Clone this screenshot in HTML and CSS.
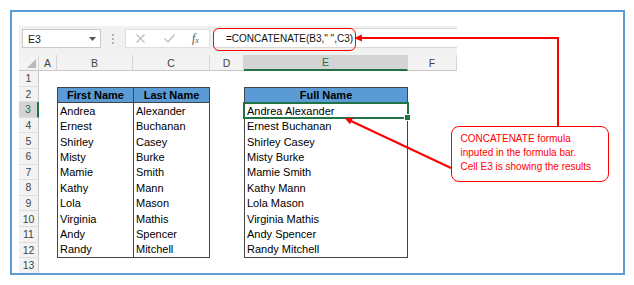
FILE: index.html
```html
<!DOCTYPE html>
<html>
<head>
<meta charset="utf-8">
<link rel="stylesheet" href="styles.css">
</head>
<body>
<div class="frame">
  <div class="excel">
    <div class="fbar">
      <div class="namebox"><span>E3</span><svg width="7" height="4" viewBox="0 0 7 4"><polygon points="0,0 7,0 3.5,4" fill="#555"/></svg></div>
      <div class="dots"><svg width="2" height="10" viewBox="0 0 2 10"><rect x="0" y="0" width="2" height="2" fill="#b5b5b5"/><rect x="0" y="4" width="2" height="2" fill="#b5b5b5"/><rect x="0" y="8" width="2" height="2" fill="#b5b5b5"/></svg></div>
      <div class="btns">
        <svg class="ic ic-x" width="9" height="9" viewBox="0 0 9 9"><path d="M0.5 0.5 L8.5 8.5 M8.5 0.5 L0.5 8.5" stroke="#bdbdbd" stroke-width="1.2" fill="none"/></svg>
        <svg class="ic ic-ok" width="11" height="9" viewBox="0 0 11 9"><path d="M0.5 4.5 L4 8 L10.5 0.5" stroke="#bdbdbd" stroke-width="1.2" fill="none"/></svg>
        <span class="fx">f<span class="fxx">x</span></span>
      </div>
      <div class="formula"><span>=CONCATENATE(B3," ",C3)</span><div class="ring"></div></div>
    </div>
    <div class="sheet">
      <div class="ch corner"><svg width="9" height="9" viewBox="0 0 9 9"><polygon points="9,0 9,9 0,9" fill="#b9b9b9"/></svg></div>
      <div class="ch">A</div>
      <div class="ch">B</div>
      <div class="ch">C</div>
      <div class="ch">D</div>
      <div class="ch sel">E</div>
      <div class="ch">F</div>

      <div class="rh">1</div>
      <div class="rh">2</div>
      <div class="rh sel">3</div>
      <div class="rh">4</div>
      <div class="rh">5</div>
      <div class="rh">6</div>
      <div class="rh">7</div>
      <div class="rh">8</div>
      <div class="rh">9</div>
      <div class="rh">10</div>
      <div class="rh">11</div>
      <div class="rh">12</div>
      <div class="rh">13</div>

      <div class="tbl names">
        <div class="th">First Name</div><div class="th">Last Name</div>
        <div class="td first">Andrea</div><div class="td">Alexander</div>
        <div class="td first">Ernest</div><div class="td">Buchanan</div>
        <div class="td first">Shirley</div><div class="td">Casey</div>
        <div class="td first">Misty</div><div class="td">Burke</div>
        <div class="td first">Mamie</div><div class="td">Smith</div>
        <div class="td first">Kathy</div><div class="td">Mann</div>
        <div class="td first">Lola</div><div class="td">Mason</div>
        <div class="td first">Virginia</div><div class="td">Mathis</div>
        <div class="td first">Andy</div><div class="td">Spencer</div>
        <div class="td first">Randy</div><div class="td">Mitchell</div>
      </div>

      <div class="tbl full">
        <div class="th">Full Name</div>
        <div class="td active">Andrea Alexander</div>
        <div class="td">Ernest Buchanan</div>
        <div class="td">Shirley Casey</div>
        <div class="td">Misty Burke</div>
        <div class="td">Mamie Smith</div>
        <div class="td">Kathy Mann</div>
        <div class="td">Lola Mason</div>
        <div class="td">Virginia Mathis</div>
        <div class="td">Andy Spencer</div>
        <div class="td">Randy Mitchell</div>
      </div>
    </div>
  </div>
</div>

<svg class="annot" width="634" height="285" viewBox="0 0 634 285">
  <polyline points="558,126 558,38 361,38" fill="none" stroke="#ff0000" stroke-width="2"/>
  <polygon points="354,38 362,34.5 362,41.5" fill="#ff0000"/>
  <line x1="451" y1="168" x2="351" y2="121" stroke="#ff0000" stroke-width="2"/>
  <polygon points="344.5,118 353,117.8 350,124.2" fill="#ff0000"/>
</svg>

<div class="callout">CONCATENATE formula<br>inputed in the formula bar.<br>Cell E3 is showing the results</div>
</body>
</html>
```

FILE: styles.css
```css
* { box-sizing: border-box; }

html, body {
  margin: 0;
  background: #ffffff;
}

body {
  padding: 10px 0 0 10px;
  width: 634px;
  height: 285px;
  overflow: hidden;
  font-family: "Liberation Sans", Arial, sans-serif;
  color: #000;
}

.frame {
  width: 615px;
  height: 265px;
  border: 2px solid #5b9bd5;
  padding: 14px 0 0 7px;
  overflow: hidden;
}

.excel {
  width: 438px;
}

/* formula bar */
.fbar {
  height: 29px;
  background: #f1f1f1;
  display: flex;
  align-items: flex-start;
  padding: 3px 0 0 3px;
}

.namebox {
  width: 79px;
  height: 19px;
  background: #fff;
  border: 1px solid #c9c9c9;
  display: flex;
  align-items: center;
  justify-content: space-between;
  padding: 0 4px 0 5px;
  font-size: 10.5px;
  color: #222;
}

.dots {
  width: 24px;
  height: 19px;
  display: flex;
  align-items: center;
  justify-content: center;
}

.btns {
  width: 85px;
  height: 19px;
  background: #fff;
  border: 1px solid #dedede;
  display: flex;
  align-items: center;
  padding-left: 10px;
}

.ic-x { margin-right: 19px; }
.ic-ok { margin-right: 17px; }

.fx {
  font-family: "Liberation Serif", "Times New Roman", serif;
  font-style: italic;
  font-size: 12px;
  color: #555;
}
.fxx {
  font-size: 8px;
  position: relative;
  top: 1px;
}

.formula {
  flex: 1;
  margin-left: 3px;
  margin-top: -1px;
  height: 20px;
  background: #fff;
  border: 1px solid #d8d8d8;
  border-right: none;
  position: relative;
  display: flex;
  align-items: center;
  padding-left: 12px;
  font-size: 10px;
  color: #111;
  white-space: pre;
}

.ring {
  position: absolute;
  left: -1px;
  top: -1px;
  width: 143px;
  height: 23px;
  border: 1.5px solid #ff0000;
  border-radius: 6px;
}

/* sheet grid */
.sheet {
  display: grid;
  grid-template-columns: 20px 18px 76px 77px 34px 164px 49px;
  grid-template-rows: 16px repeat(13, 15.6px);
  background: #fff;
}

.ch {
  background: #f3f3f3;
  border-right: 1px solid #d6d6d6;
  border-bottom: 1px solid #c8c8c8;
  font-size: 10.5px;
  color: #444;
  display: flex;
  align-items: center;
  justify-content: center;
}

.ch.corner {
  justify-content: flex-end;
  align-items: flex-end;
  padding: 0 2px 2px 0;
}

.ch.sel {
  background: #d4d4d4;
  color: #217346;
  border-bottom: 2px solid #217346;
}

.rh {
  grid-column: 1;
  background: #f3f3f3;
  border-right: 1px solid #c8c8c8;
  border-bottom: 1px solid #dedede;
  font-size: 10.5px;
  color: #444;
  display: flex;
  align-items: center;
  justify-content: center;
}

.rh.sel {
  background: #d4d4d4;
  color: #217346;
  border-right: 2px solid #217346;
}

/* data tables */
.tbl {
  grid-row: 3 / 14;
  border: 1px solid #444;
  display: grid;
  grid-template-rows: repeat(11, 1fr);
  font-size: 11px;
}

.tbl.names {
  grid-column: 3 / 5;
  grid-template-columns: 76px 1fr;
}

.tbl.full {
  grid-column: 6 / 7;
  grid-template-columns: 1fr;
}

.th {
  background: #5b9bd5;
  border-bottom: 1px solid #444;
  font-weight: bold;
  display: flex;
  align-items: center;
  justify-content: center;
}

.names .th:first-child { border-right: 1px solid #444; }

.td {
  display: flex;
  align-items: center;
  padding-left: 2px;
  white-space: nowrap;
}

.td.first { border-right: 1px solid #444; }

.td.active { position: relative; }
.td.active::after {
  content: "";
  position: absolute;
  left: -2px;
  right: -2px;
  top: -1px;
  bottom: -1px;
  border: 2px solid #217346;
}
.td.active::before {
  content: "";
  position: absolute;
  right: -4px;
  bottom: -3px;
  width: 5px;
  height: 5px;
  background: #217346;
  border: 1px solid #fff;
  z-index: 2;
}

/* annotations */
.annot {
  position: absolute;
  left: 0;
  top: 0;
  pointer-events: none;
}

.callout {
  position: absolute;
  left: 451px;
  top: 126px;
  width: 158px;
  height: 56px;
  border: 1.5px solid #ff0000;
  border-radius: 8px;
  background: #fff;
  color: #ff0000;
  font-size: 10px;
  line-height: 14px;
  padding: 5px 0 0 8.5px;
  white-space: nowrap;
}
```
